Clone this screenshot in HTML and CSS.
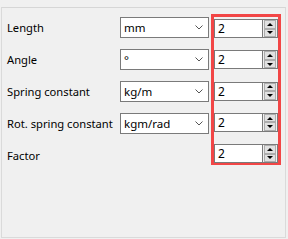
FILE: index.html
```html
<!DOCTYPE html>
<html lang="en">
<head>
  <meta charset="UTF-8">
  <title>Units</title>
  <link rel="stylesheet" href="styles.css">
</head>
<body>

<div class="panel">
  <div class="fields">
    <div class="row">
      <span class="label">Length</span>
      <div class="combo"><span>mm</span><svg class="chev" width="8" height="5" viewBox="0 0 8 5"><polyline points="0.5,0.5 4,4 7.5,0.5" fill="none" stroke="#555" stroke-width="1"/></svg></div>
    </div>
    <div class="row">
      <span class="label">Angle</span>
      <div class="combo"><span>°</span><svg class="chev" width="8" height="5" viewBox="0 0 8 5"><polyline points="0.5,0.5 4,4 7.5,0.5" fill="none" stroke="#555" stroke-width="1"/></svg></div>
    </div>
    <div class="row">
      <span class="label">Spring constant</span>
      <div class="combo"><span>kg/m</span><svg class="chev" width="8" height="5" viewBox="0 0 8 5"><polyline points="0.5,0.5 4,4 7.5,0.5" fill="none" stroke="#555" stroke-width="1"/></svg></div>
    </div>
    <div class="row">
      <span class="label">Rot. spring constant</span>
      <div class="combo"><span>kgm/rad</span><svg class="chev" width="8" height="5" viewBox="0 0 8 5"><polyline points="0.5,0.5 4,4 7.5,0.5" fill="none" stroke="#555" stroke-width="1"/></svg></div>
    </div>
    <div class="row">
      <span class="label">Factor</span>
    </div>
  </div>

  <div class="highlight">
    <div class="spin"><span class="value">2</span><div class="arrows"><div class="btn"><span class="up"></span></div><div class="btn"><span class="down"></span></div></div></div>
    <div class="spin"><span class="value">2</span><div class="arrows"><div class="btn"><span class="up"></span></div><div class="btn"><span class="down"></span></div></div></div>
    <div class="spin"><span class="value">2</span><div class="arrows"><div class="btn"><span class="up"></span></div><div class="btn"><span class="down"></span></div></div></div>
    <div class="spin"><span class="value">2</span><div class="arrows"><div class="btn"><span class="up"></span></div><div class="btn"><span class="down"></span></div></div></div>
    <div class="spin"><span class="value">2</span><div class="arrows"><div class="btn"><span class="up"></span></div><div class="btn"><span class="down"></span></div></div></div>
  </div>
</div>

</body>
</html>
```

FILE: styles.css
```css
* {
  box-sizing: border-box;
}

body {
  margin: 0;
  background-color: #f0f0f0;
  font-family: 'Noto Sans', 'Open Sans', sans-serif;
  font-size: 11.2px;
  color: #000;
}

.panel {
  display: flex;
  width: 285px;
  height: 231px;
  margin: 7px 0 0 1px;
  border: 1px solid #dadada;
  border-top-color: #d6d6d6;
}

.fields {
  display: flex;
  flex-direction: column;
  gap: 11px;
  padding: 9px 0 0 5px;
}

.row {
  display: flex;
  align-items: center;
  height: 21px;
}

.label {
  width: 113px;
  white-space: nowrap;
}

.combo {
  display: flex;
  align-items: center;
  justify-content: space-between;
  width: 89px;
  height: 21px;
  padding: 0 5px 0 3px;
  background-color: #fff;
  border: 1px solid #7a7a7a;
  font-size: 11.5px;
}

.highlight {
  display: flex;
  flex-direction: column;
  gap: 12.25px;
  width: 70px;
  height: 151px;
  margin: 6px 0 0 2px;
  padding: 2px 0 0 0;
  border: 3px solid #f24646;
}

.spin {
  display: flex;
  height: 19px;
}

.value {
  flex: 1;
  display: flex;
  align-items: center;
  padding-left: 3px;
  background-color: #fff;
  border: 1px solid #7a7a7a;
  font-size: 12px;
}

.arrows {
  display: flex;
  flex-direction: column;
  width: 15px;
  border: 1px solid #7a7a7a;
  border-left: none;
  background-color: #f0f0f0;
}

.btn {
  flex: 1;
  display: flex;
  align-items: center;
  justify-content: center;
  margin: 0 1px 0 1px;
  border: 1px solid #adadad;
  background-color: #e1e1e1;
}

.up {
  width: 0;
  height: 0;
  border-left: 3px solid transparent;
  border-right: 3px solid transparent;
  border-bottom: 3px solid #000;
}

.down {
  width: 0;
  height: 0;
  border-left: 3px solid transparent;
  border-right: 3px solid transparent;
  border-top: 3px solid #000;
}
```
